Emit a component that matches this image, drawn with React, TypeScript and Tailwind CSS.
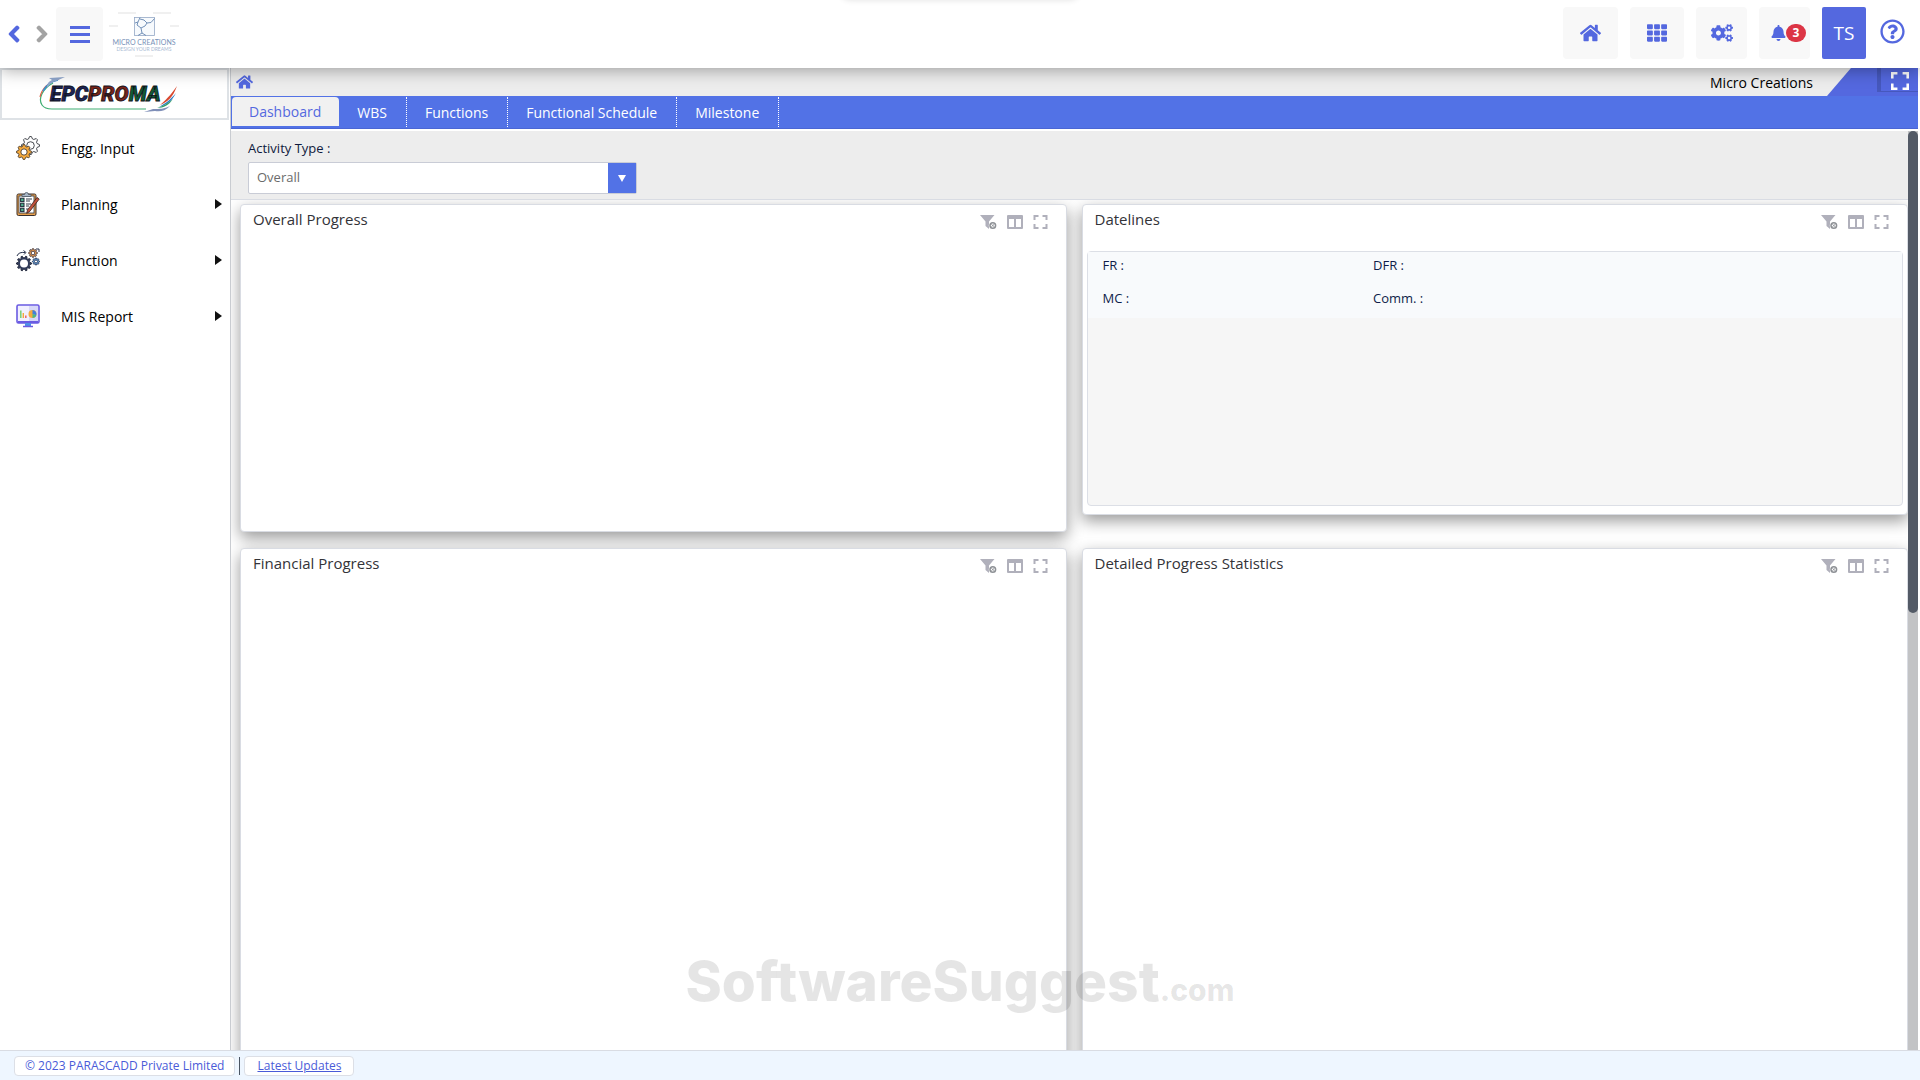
import React, { useState } from 'react';
import {
  FaBell,
  FaChevronLeft,
  FaChevronRight,
  FaCogs,
  FaHome,
  FaRegQuestionCircle,
  FaTh
} from 'react-icons/fa';

const tabs = ['Dashboard', 'WBS', 'Functions', 'Functional Schedule', 'Milestone'];

interface CogProps {
  cx: number;
  cy: number;
  r: number;
  fill: string;
  stroke: string;
  hole?: string;
  teeth?: number;
}

const Cog: React.FC<CogProps> = ({ cx, cy, r, fill, stroke, hole = '#fff', teeth = 8 }) => {
  const points: string[] = [];
  for (let i = 0; i < teeth * 4; i++) {
    const angle = (Math.PI * 2 * (i - 0.5)) / (teeth * 4);
    const radius = i % 4 < 2 ? r : r * 0.76;
    points.push(`${(cx + Math.cos(angle) * radius).toFixed(2)},${(cy + Math.sin(angle) * radius).toFixed(2)}`);
  }
  return (
    <g stroke={stroke} strokeWidth="0.9" strokeLinejoin="round">
      <polygon points={points.join(' ')} fill={fill} />
      <circle cx={cx} cy={cy} r={r * 0.42} fill={hole} />
    </g>
  );
};

const EngineeringIcon = () => (
  <svg viewBox="0 0 24 24" className="h-6 w-6" aria-hidden="true">
    <Cog cx={14.5} cy={9.5} r={9} fill="#fff" stroke="#33373d" />
    <Cog cx={8} cy={16} r={7.5} fill="#f5a93c" stroke="#4a3a28" />
  </svg>
);

const PlanningIcon = () => (
  <svg viewBox="0 0 24 24" className="h-6 w-6" aria-hidden="true">
    <rect x="1" y="2" width="19" height="21.5" rx="1.5" fill="#e8a04c" stroke="#3a2f2a" />
    <rect x="3" y="4" width="15" height="17" fill="#fff" stroke="#2d3748" strokeWidth="0.8" />
    <path d="M6 4.5V2.5h2.5a2 2 0 0 1 4 0H15v2z" fill="#a9b7c6" stroke="#4a5563" strokeWidth="0.8" />
    <g fill="#4fae8c" stroke="#1f2937" strokeWidth="1">
      <rect x="4.6" y="6.2" width="3.4" height="3.4" />
      <rect x="4.6" y="11.2" width="3.4" height="3.4" />
      <rect x="4.6" y="16.2" width="3.4" height="3.4" />
    </g>
    <path d="M10 7h6M10 9h4M10 12h5M10 14h3M10 17h2" stroke="#1f2937" strokeWidth="0.9" />
    <path d="M21 5.5l2.2 1.6-9.5 12.4-3 1.8.8-3.4z" fill="#c2523c" stroke="#3a1f1a" strokeWidth="0.8" />
  </svg>
);

const FunctionIcon = () => (
  <svg viewBox="0 0 24 24" className="h-6 w-6" aria-hidden="true">
    <Cog cx={8} cy={15.5} r={7.5} fill="#333d5c" stroke="#1d2438" teeth={10} />
    <circle cx="8" cy="15.5" r="4" fill="#fff" />
    <Cog cx={17} cy={5} r={4.4} fill="#f0a050" stroke="#3b3340" />
    <Cog cx={20} cy={13.5} r={3.6} fill="#6fa8dc" stroke="#26385c" />
    <path d="M1 8c1-3 4-4 8-3.5M7.5 2.5l2.5 2-2 2M20 1h3v3" fill="none" stroke="#26304a" strokeWidth="1" />
  </svg>
);

const ReportIcon = () => (
  <svg viewBox="0 0 24 24" className="h-6 w-6" aria-hidden="true">
    <rect x="1" y="1" width="22" height="18" rx="1.5" fill="#f1f0ff" stroke="#6a5be2" strokeWidth="1.6" />
    <path d="M13 2h9v16h-9z" fill="#d7d8f8" />
    <path d="M2 17h20v2H2z" fill="#6a5be2" />
    <path d="M9 19h6v3H9z" fill="#4f8fe8" />
    <path d="M7 22.5h10" stroke="#6a5be2" strokeWidth="1.5" />
    <path d="M4.8 14V6.5" stroke="#7ed07e" strokeWidth="1.6" />
    <path d="M7.3 14V9" stroke="#f5a93c" strokeWidth="1.4" />
    <path d="M9.8 14v-2.5" stroke="#e85d5d" strokeWidth="1.4" />
    <circle cx="16.5" cy="10" r="4" fill="#f5a93c" />
    <path d="M16.5 10V6a4 4 0 0 1 3.8 5.2z" fill="#3f7fe0" />
    <path d="M16.5 10l3.8 1.2a4 4 0 0 1-3.8 2.8z" fill="#46b98a" />
  </svg>
);

const menuItems = [
  { label: 'Engg. Input', icon: <EngineeringIcon />, hasChildren: false },
  { label: 'Planning', icon: <PlanningIcon />, hasChildren: true },
  { label: 'Function', icon: <FunctionIcon />, hasChildren: true },
  { label: 'MIS Report', icon: <ReportIcon />, hasChildren: true }
];

const CompanyLogo = () => (
  <svg viewBox="0 0 72 48" className="h-12 w-18" role="img" aria-label="Micro Creations">
    <g stroke="#f0f0f0" strokeWidth="2">
      <path d="M10 2h18M45 2h18M1 15h9M62 15h9M27 45h18" />
    </g>
    <rect x="26.5" y="6.5" width="20" height="18" fill="#f7fafd" stroke="#94a9c6" strokeWidth="0.8" />
    <path
      d="M27 12l3-1 2-4.5M30 11l-1 3 4 3 4-2 2-3-3-3-4-1M39 12l4-.5 3.5-4M33 17l1 5-4 2.5M34 22l4 2.5"
      fill="none"
      stroke="#7391b8"
      strokeWidth="1"
    />
    <text x="36" y="34" textAnchor="middle" fontFamily="Lato, sans-serif" fontSize="7" fill="#7891b8">
      MICRO CREATIONS
    </text>
    <text x="36" y="40" textAnchor="middle" fontFamily="Lato, sans-serif" fontSize="5" fill="#a9bad3">
      DESIGN YOUR DREAMS
    </text>
  </svg>
);

const ProductLogo = () => (
  <svg viewBox="0 0 140 38" className="h-[38px] w-[140px]" role="img" aria-label="EPCPROMA">
    <path d="M14 8C3 14-1 24 3 30c2 3 5 4 10 4h94" fill="none" stroke="#3fae72" strokeWidth="1.2" />
    <path d="M1 22C3 13 10 7 20 4" fill="none" stroke="#e2604a" strokeWidth="1.2" />
    <path d="M4 16c4-7 9-10 15-11" fill="none" stroke="#3b8fd0" strokeWidth="1.6" />
    <path d="M10 3l16-1-9 4c-4 1-7 4-9 7 0-4 1-6 5-8z" fill="#8fa6cc" />
    <path d="M138 11c-4 11-9 16-17 19 9-8 12-12 17-19z" fill="#d9482f" />
    <path d="M137 18c-4 8-9 12-17 14 7-4 11-7 17-14z" fill="#2e7bc4" />
    <path d="M134 24c-4 6-9 9-16 9 6-2 10-4 16-9z" fill="#35a06c" />
    <path d="M131 31c-5 5-10 6-15 5l-11 1 9-3c7 0 11 0 17-3z" fill="#7f8fb8" />
    <g
      fontFamily="Roboto, sans-serif"
      fontSize="21"
      fontWeight="900"
      fontStyle="italic"
      stroke="#11131c"
      strokeWidth="0.8"
    >
      <text x="11" y="26">
        <tspan fill="#1d2558">EPC</tspan>
        <tspan fill="#7a2418">PRO</tspan>
        <tspan fill="#0f5c34">MA</tspan>
      </text>
    </g>
  </svg>
);

const ClearFilterIcon = () => (
  <svg viewBox="0 0 17 16" className="h-4 w-[17px]" aria-hidden="true">
    <path d="M0 1h14.5L9 7.5V15l-3.5-3V7.5z" fill="#b0b0bb" />
    <circle cx="12.8" cy="11.5" r="4" fill="#fff" />
    <circle cx="12.8" cy="11.5" r="2.8" fill="none" stroke="#8e9196" strokeWidth="1.5" />
    <path d="M11.5 10.2l2.6 2.6M14.1 10.2l-2.6 2.6" stroke="#8e9196" strokeWidth="1" />
  </svg>
);

const ColumnsIcon = () => (
  <svg viewBox="0 0 16 14" className="h-3.5 w-4" aria-hidden="true">
    <rect width="16" height="14" rx="1" fill="#b0b0bb" />
    <path d="M2 4h5v8H2zM9 4h5v8H9z" fill="#fff" />
  </svg>
);

const ExpandIcon = ({ className }: { className: string }) => (
  <svg viewBox="0 0 14 14" className={className} aria-hidden="true">
    <path d="M1 5V1h4M9 1h4v4M13 9v4H9M5 13H1V9" fill="none" stroke="currentColor" strokeWidth="2" />
  </svg>
);

interface PanelProps {
  title: string;
  className: string;
  children?: React.ReactNode;
}

const Panel: React.FC<PanelProps> = ({ title, className, children }) => (
  <section
    className={`flex flex-col rounded border border-[#d9dce3] bg-white shadow-[0_6px_16px_rgba(0,0,0,0.4)] ${className}`}
  >
    <div className="flex items-start justify-between pt-[3px] pr-[18px] pl-3">
      <h2 className="text-[15px] leading-[22px] text-[#333338]">{title}</h2>
      <div className="flex items-center gap-2.5 pt-1.5 text-[#b0b0bb]">
        <button aria-label="Clear filter">
          <ClearFilterIcon />
        </button>
        <button aria-label="Columns">
          <ColumnsIcon />
        </button>
        <button aria-label="Expand">
          <ExpandIcon className="h-3.5 w-[15px]" />
        </button>
      </div>
    </div>
    {children}
  </section>
);

const Header = () => (
  <header className="relative z-10 flex h-17 shrink-0 items-center justify-between bg-white pr-[15px] pl-2 shadow-[0_2px_16px_rgba(0,0,0,0.35)]">
    <div className="absolute -top-5 left-1/2 h-5 w-60 -translate-x-1/2 rounded-full shadow-[0_0_6px_rgba(0,0,0,0.12)]" />
    <div className="flex items-center">
      <button aria-label="Back" className="text-[#5468df]">
        <FaChevronLeft className="h-[18px] w-3 stroke-current stroke-40" />
      </button>
      <button aria-label="Forward" className="ml-4 text-[#a3a3a3]">
        <FaChevronRight className="h-[18px] w-3 stroke-current stroke-40" />
      </button>
      <button
        aria-label="Toggle menu"
        className="ml-2 flex h-[54px] w-[47px] flex-col items-center justify-center gap-1 rounded bg-[#f8f8f8]"
      >
        <span className="h-[3px] w-5 bg-[#5468df]" />
        <span className="h-[3px] w-5 bg-[#5468df]" />
        <span className="h-[3px] w-5 bg-[#5468df]" />
      </button>
      <a href="#" className="ml-[5px] pt-0.5">
        <CompanyLogo />
      </a>
    </div>
    <div className="flex items-center gap-3 pb-0.5 text-[#5468df]">
      <button aria-label="Home" className="flex h-[52px] w-[55px] items-center justify-center rounded bg-[#f8f8f8]">
        <FaHome className="h-5 w-[21px]" />
      </button>
      <button aria-label="Modules" className="flex h-[52px] w-[54px] items-center justify-center rounded bg-[#f8f8f8]">
        <FaTh className="h-[22px] w-5" />
      </button>
      <button aria-label="Settings" className="flex h-[52px] w-[51px] items-center justify-center rounded bg-[#f8f8f8]">
        <FaCogs className="h-5 w-[22px]" />
      </button>
      <button
        aria-label="Notifications"
        className="flex h-[52px] w-[51px] items-center justify-end rounded bg-[#f8f8f8] pr-1"
      >
        <FaBell className="h-4 w-[15px]" />
        <span className="flex h-[18px] w-5 items-center justify-center rounded-full bg-[#dc3545] text-[12px] font-bold text-white">
          3
        </span>
      </button>
      <button className="h-[52px] w-11 rounded-xs bg-[#5468df] text-[19px] text-white">TS</button>
      <button aria-label="Help" className="ml-0.5 pb-1">
        <FaRegQuestionCircle className="h-[25px] w-[25px]" />
      </button>
    </div>
  </header>
);

const Sidebar = () => (
  <aside className="w-[231px] shrink-0 border-r border-[#c9ccd1] bg-white">
    <div className="mr-px flex h-[52px] items-center justify-center border-2 border-[#dee2e6] pr-3">
      <ProductLogo />
    </div>
    <nav>
      {menuItems.map((item) => (
        <a key={item.label} href="#" className="flex h-14 items-center pr-2 pl-4 text-[14px] text-black">
          {item.icon}
          <span className="ml-[21px] flex-1">{item.label}</span>
          {item.hasChildren && (
            <svg viewBox="0 0 7 10" className="h-2.5 w-[7px]" aria-hidden="true">
              <path d="M0 0l7 5-7 5z" fill="#111" />
            </svg>
          )}
        </a>
      ))}
    </nav>
  </aside>
);

export default function App() {
  const [activeTab, setActiveTab] = useState('Dashboard');

  return (
    <div className="relative flex h-screen flex-col overflow-hidden bg-white font-['Open_Sans','Noto_Sans',sans-serif]">
      <Header />

      <div className="flex min-h-0 flex-1">
        <Sidebar />

        <main className="flex min-w-0 flex-1 flex-col pr-0.5">
          {/* Breadcrumb */}
          <div className="flex h-7 shrink-0 items-center justify-between bg-[#ededed] pl-[5px]">
            <a href="#" aria-label="Home" className="text-[#5468df]">
              <FaHome className="h-4 w-[17px]" />
            </a>
            <div className="flex h-full items-center">
              <span className="text-[14px] text-black">Micro Creations</span>
              <div className="ml-3.5 flex h-full w-[91px] justify-end bg-[#5468df] [clip-path:polygon(24px_0,100%_0,100%_100%,0_100%)]">
                <button
                  aria-label="Full screen"
                  className="flex h-6 w-[41px] items-center justify-center border-b border-l-4 border-[#4658bd] pt-0.5 text-white"
                >
                  <ExpandIcon className="h-[18px] w-[18px]" />
                </button>
              </div>
            </div>
          </div>

          {/* Tabs */}
          <div role="tablist" className="flex h-[33px] shrink-0 border-b border-[#4a66d4] bg-[#5272e6] pt-px pl-px text-[14px]">
            {tabs.map((tab) => (
              <button
                key={tab}
                role="tab"
                aria-selected={tab === activeTab}
                onClick={() => setActiveTab(tab)}
                className={
                  tab === activeTab
                    ? 'mb-0.5 rounded-t bg-[#f1f1f1] pr-[18px] pl-[17px] text-[#5468df]'
                    : 'mb-px border-r border-dotted border-white pr-[19px] pl-[18px] text-white'
                }
              >
                {tab}
              </button>
            ))}
          </div>

          <div className="flex min-h-0 flex-1 pt-0.5">
            <div className="flex min-w-0 flex-1 flex-col overflow-hidden">
              {/* Filter */}
              <div className="h-[69px] shrink-0 border-b border-[#d9dce3] bg-[#ededed] px-[17px] pt-[7px]">
                <label htmlFor="activity-type" className="block text-[13px] leading-5 text-[#0f1a3d]">
                  Activity Type :
                </label>
                <div className="relative mt-1 w-[389px]">
                  <select
                    id="activity-type"
                    className="h-8 w-full appearance-none rounded-xs border border-[#c9ccd6] bg-white pl-2 text-[13px] text-[#6b6b6b]"
                  >
                    <option>Overall</option>
                  </select>
                  <span className="pointer-events-none absolute inset-y-px right-px flex w-7 items-center justify-center bg-[#5272e6]">
                    <svg viewBox="0 0 10 7" className="h-[7px] w-2.5" aria-hidden="true">
                      <path d="M1 0h8L5 7z" fill="#fff" />
                    </svg>
                  </span>
                </div>
              </div>

              {/* Panels */}
              <div className="grid min-h-0 flex-1 grid-cols-2 content-start items-start gap-x-[15px] gap-y-4 overflow-hidden pt-1 pl-[9px]">
                <Panel title="Overall Progress" className="h-[328px]" />
                <Panel title="Datelines" className="h-[311px]">
                  <div className="mx-1 mt-[21px] mb-2 flex-1 rounded-sm border border-[#dcdfe6] bg-[#f6f6f6]">
                    <dl className="grid grid-cols-3 gap-x-3 bg-[#f8fafc] pl-[15px] text-[13px] leading-[26px] text-[#0f1d4a]">
                      <dt className="h-[33px]">FR :</dt>
                      <dt className="col-span-2">DFR :</dt>
                      <dt className="h-[33px]">MC :</dt>
                      <dt className="col-span-2">Comm. :</dt>
                    </dl>
                  </div>
                </Panel>
                <Panel title="Financial Progress" className="h-[640px]" />
                <Panel title="Detailed Progress Statistics" className="h-[640px]" />
              </div>
            </div>

            {/* Scrollbar */}
            <div className="w-2.5 shrink-0 bg-[#c2c3c5]">
              <div className="h-[482px] rounded-full bg-[#535a66]" />
            </div>
          </div>
        </main>
      </div>

      <footer className="flex h-[30px] shrink-0 items-center border-t border-[#d9dce3] bg-[#eef6ff] pt-px pl-3.5 text-[12px] text-[#4a5bd8]">
        <span className="rounded border border-[#dcdfe6] bg-white px-2.5 leading-[18px]">
          © 2023 PARASCADD Private Limited
        </span>
        <span className="mx-1 h-[18px] w-px bg-[#4b5563]" />
        <a href="#" className="rounded border border-[#dcdfe6] bg-white px-3 leading-[18px] underline">
          Latest Updates
        </a>
      </footer>

      {/* Watermark */}
      <div className="pointer-events-none absolute inset-x-0 bottom-[49px] z-20 text-center font-[Inter,'Open_Sans',sans-serif] leading-[72px] font-extrabold text-black/10">
        <span className="text-[55px]">SoftwareSuggest</span>
        <span className="text-[30px]">.com</span>
      </div>
    </div>
  );
}
